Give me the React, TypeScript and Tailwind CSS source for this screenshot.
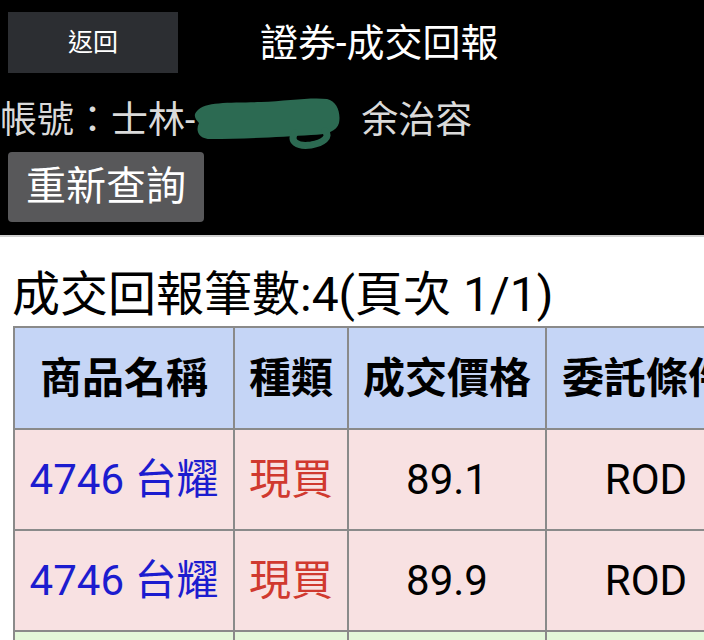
const font = { fontFamily: "Roboto, 'Noto Sans CJK TC', sans-serif" };

type Row = { name: string; kind: string; price: string; cond: string; bg: string };

const rows: Row[] = [
  { name: "4746 台耀", kind: "現買", price: "89.1", cond: "ROD", bg: "bg-[#f8e1e2]" },
  { name: "4746 台耀", kind: "現買", price: "89.9", cond: "ROD", bg: "bg-[#f8e1e2]" },
  { name: "4746 台耀", kind: "現買", price: "90.0", cond: "ROD", bg: "bg-[#e3f8d9]" },
];

// hand-drawn redaction over the account number
function Scribble() {
  return (
    <svg width="152" height="54" viewBox="0 0 152 54" className="inline-block -mx-1 translate-y-[2px]">
      <path
        d="M6 16 C14 6 40 8 70 7 C95 6 120 2 136 4 C146 6 150 18 148 28 C146 36 136 40 120 40 C90 42 50 44 20 44 C8 44 4 36 8 28 C4 24 2 20 6 16 Z"
        fill="#2c6a52"
      />
      <path
        d="M104 38 C98 46 106 52 120 50 C132 48 140 42 134 36"
        stroke="#2c6a52"
        strokeWidth="7"
        fill="none"
        strokeLinecap="round"
      />
    </svg>
  );
}

export default function App() {
  return (
    <div className="w-[704px] h-[640px] overflow-hidden bg-white" style={font}>
      <div className="bg-black h-[237px] border-b-2 border-[#cfcfcf]">
        <div className="flex items-center pt-3">
          <div className="ml-2 w-[170px] h-[61px] bg-[#2c2e32] flex items-center justify-center text-white text-[25px]">
            返回
          </div>
          <div className="ml-[82px] text-white text-[38px] leading-none">證券-成交回報</div>
        </div>
        <div className="mt-[22px] h-[50px] flex items-center text-[#dadada] text-[37px] leading-none whitespace-nowrap">
          <span>帳號：士林-</span>
          <Scribble />
          <span className="ml-[22px]">余治容</span>
        </div>
        <div className="ml-2 mt-[7px] w-[196px] h-[70px] rounded bg-[#58585a] flex items-center justify-center text-white text-[40px] leading-none">
          重新查詢
        </div>
      </div>
      <div className="pl-3 pt-[34px] h-[89px] text-black text-[48px] leading-none whitespace-nowrap">
        成交回報筆數:4(頁次 1/1)
      </div>
      <table className="ml-[13px] border-collapse table-fixed w-[732px] text-[42px]">
        <colgroup>
          <col className="w-[220px]" />
          <col className="w-[114px]" />
          <col className="w-[198px]" />
          <col className="w-[200px]" />
        </colgroup>
        <thead>
          <tr className="h-[102px] bg-[#c5d5f6]">
            {["商品名稱", "種類", "成交價格", "委託條件"].map((h) => (
              <th key={h} className="border-2 border-[#8a8a8a] font-bold text-black text-center whitespace-nowrap overflow-hidden">
                {h}
              </th>
            ))}
          </tr>
        </thead>
        <tbody>
          {rows.map((r, i) => (
            <tr key={i} className={`h-[101px] ${r.bg}`}>
              <td className="border-2 border-[#8a8a8a] text-center text-[#1c1ccf] whitespace-nowrap">{r.name}</td>
              <td className="border-2 border-[#8a8a8a] text-center text-[#d0392f] whitespace-nowrap">{r.kind}</td>
              <td className="border-2 border-[#8a8a8a] text-center text-black">{r.price}</td>
              <td className="border-2 border-[#8a8a8a] text-center text-black">{r.cond}</td>
            </tr>
          ))}
        </tbody>
      </table>
    </div>
  );
}
